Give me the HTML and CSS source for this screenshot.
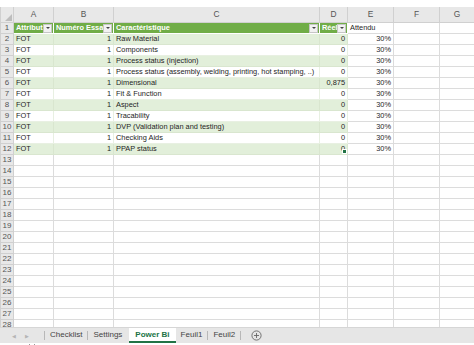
FILE: index.html
```html
<!DOCTYPE html>
<html lang="fr">
<head>
    <meta charset="UTF-8">
    <title>Power Bi</title>
    <link rel="stylesheet" href="styles.css">
</head>
<body>
    <div class="top-band"></div>
    <div class="sheet">
        <table class="grid">
            <colgroup>
                <col class="c-num"><col class="c-a"><col class="c-b"><col class="c-c"><col class="c-d"><col class="c-e"><col class="c-f"><col class="c-g">
            </colgroup>
            <thead>
                <tr class="col-head">
                    <th class="corner"><span class="tri"></span></th>
                    <th>A</th><th>B</th><th>C</th><th>D</th><th>E</th><th>F</th><th>G</th>
                </tr>
            </thead>
            <tbody id="rows">
                <tr class="tbl-head">
                    <td class="rn">1</td>
                    <td class="th">Attribut<span class="drop"></span></td>
                    <td class="th">Numéro Essai<span class="drop"></span></td>
                    <td class="th">Caractéristique<span class="drop"></span></td>
                    <td class="th">Réel<span class="drop"></span></td>
                    <td>Attendu</td><td></td><td></td>
                </tr>
            </tbody>
        </table>
    </div>
    <div class="tabs">
        <span class="arrow">&#9664;</span>
        <span class="arrow">&#9654;</span>
        <span class="sep"></span>
        <span class="tab">Checklist</span>
        <span class="sep"></span>
        <span class="tab">Settings</span>
        <span class="tab active">Power Bi</span>
        <span class="tab">Feuil1</span>
        <span class="sep"></span>
        <span class="tab">Feuil2</span>
        <span class="sep"></span>
        <span class="add">
            <svg width="11" height="11" viewBox="0 0 11 11"><circle cx="5.5" cy="5.5" r="4.6" fill="none" stroke="#666" stroke-width="0.9"/><path d="M5.5 3v5M3 5.5h5" stroke="#666" stroke-width="0.9"/></svg>
        </span>
    </div>
    <div class="status"><span class="grip"></span></div>

    <script>
        const items = [
            ["Raw Material", "0"],
            ["Components", "0"],
            ["Process status (injection)", "0"],
            ["Process status (assembly, welding, printing, hot stamping, ..)", "0"],
            ["Dimensional", "0,875"],
            ["Fit & Function", "0"],
            ["Aspect", "0"],
            ["Tracability", "0"],
            ["DVP (Validation plan and testing)", "0"],
            ["Checking Aids", "0"],
            ["PPAP status", "0"]
        ];
        const body = document.getElementById("rows");
        let html = "";
        items.forEach((it, i) => {
            const band = i % 2 === 0 ? "band" : "";
            const last = i === items.length - 1 ? '<span class="handle"></span>' : "";
            html += `<tr class="${band}">
                <td class="rn">${i + 2}</td>
                <td class="t">FOT</td>
                <td class="t r">1</td>
                <td class="t">${it[0]}</td>
                <td class="t r cur">${it[1]}${last}</td>
                <td class="r">30%</td><td></td><td></td>
            </tr>`;
        });
        for (let n = 13; n <= 28; n++) {
            html += `<tr><td class="rn">${n}</td><td></td><td></td><td></td><td></td><td></td><td></td><td></td></tr>`;
        }
        body.innerHTML += html;
    </script>
</body>
</html>
```

FILE: styles.css
```css
body {
    margin: 0;
    width: 474px;
    height: 345px;
    overflow: hidden;
    background: #fff;
    font-family: "Liberation Sans", Arial, sans-serif;
    font-size: 7.4px;
    color: #1e1e1e;
}

.top-band { height: 7px; background: #fff; }

.sheet {
    height: 320px;
    overflow: hidden;
}

.grid {
    border-collapse: collapse;
    table-layout: fixed;
    width: 474px;
}
.c-num { width: 13px; }
.c-a { width: 40px; }
.c-b { width: 60px; }
.c-c { width: 206px; }
.c-d { width: 28px; }
.c-e { width: 46px; }
.c-f { width: 46px; }
.c-g { width: 35px; }

.grid td, .grid th {
    height: 11px;
    padding: 0 2px;
    border: 1px solid #dcdcdc;
    white-space: nowrap;
    overflow: hidden;
    line-height: 10px;
    box-sizing: border-box;
}
.grid td.t, .grid td.th { overflow: visible; }

.col-head th {
    height: 15px;
    background: #e8e8e8;
    color: #555;
    font-weight: normal;
    font-size: 8.4px;
    border-color: #d0d0d0;
    border-top: none;
}
.corner { position: relative; }
.tri {
    position: absolute;
    right: 1px;
    bottom: 1px;
    border-left: 7px solid transparent;
    border-bottom: 7px solid #bdbdbd;
}

.rn {
    background: #e8e8e8;
    color: #555;
    text-align: center;
    font-size: 8px;
    border-color: #d0d0d0 !important;
    padding: 0 !important;
}

.tbl-head .th {
    background: #70ad47;
    color: #fff;
    font-weight: bold;
    position: relative;
    border-color: #fff #fff #fff #70ad47;
}
.drop {
    position: absolute;
    right: 1px;
    top: 1px;
    width: 7px;
    height: 7px;
    background: #f2f2f2;
    border: 1px solid #c6c6c6;
}
.drop::after {
    content: "";
    position: absolute;
    left: 1.5px;
    top: 2.5px;
    border-left: 2px solid transparent;
    border-right: 2px solid transparent;
    border-top: 2px solid #444;
}

.band .t { background: #e2efda; }
.grid .t { border-color: #e8f0e2; }
.grid .band .t { border-color: #d9e6cf; }

.r { text-align: right; }
.cur { position: relative; }
.handle {
    position: absolute;
    right: 0;
    bottom: 0;
    width: 3px;
    height: 3px;
    background: #217346;
    border: 1px solid #fff;
}

.tabs {
    height: 15px;
    background: #e6e6e6;
    border-top: 1px solid #d6d6d6;
    display: flex;
    align-items: center;
    color: #444;
    font-size: 8px;
}
.arrow {
    color: #b5b5b5;
    font-size: 5px;
    margin-left: 12px;
}
.arrow + .arrow { margin-left: 9px; }
.sep {
    width: 1px;
    height: 9px;
    background: #b8b8b8;
}
.arrow + .sep { margin-left: 15px; }
.tab {
    padding: 0 5px;
    height: 15px;
    line-height: 14px;
}
.tab.active {
    background: #fff;
    color: #217346;
    font-weight: bold;
    border-bottom: 2px solid #217346;
    box-sizing: border-box;
    padding: 0 6px;
    margin-left: 2px;
}
.add {
    margin-left: 10px;
    display: flex;
    align-items: center;
}

.status {
    height: 3px;
    background: #fff;
    position: relative;
}
.grip {
    position: absolute;
    left: 29px;
    top: 1px;
    width: 4px;
    height: 2px;
    border-left: 1px dotted #999;
    border-right: 1px dotted #999;
}
```
